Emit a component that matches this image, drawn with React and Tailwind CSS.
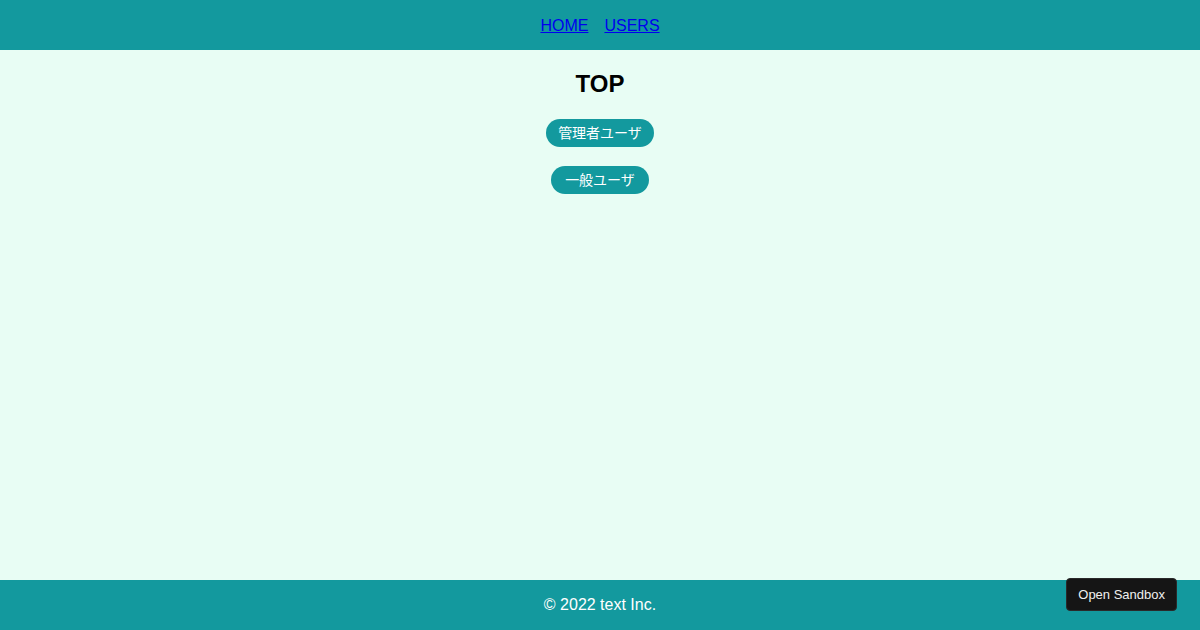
import React from "react";

const SecondaryButton = ({ children, wide }) => (
  <button
    className={`h-[28px] rounded-full bg-[#13999e] text-white text-[14px] leading-none ${
      wide ? "px-3" : "px-[14px]"
    }`}
  >
    {children}
  </button>
);

const App = () => {
  return (
    <div
      className="min-h-screen flex flex-col bg-[#e8fdf4]"
      style={{ fontFamily: '"Liberation Sans", "Noto Sans CJK JP", sans-serif' }}
    >
      <header className="h-[50px] shrink-0 bg-[#13999e] flex items-center justify-center gap-4 pt-[2px]">
        <a href="#" className="text-[16px] text-[#0000ee] underline">HOME</a>
        <a href="#" className="text-[16px] text-[#0000ee] underline">USERS</a>
      </header>

      <main className="flex-1 flex flex-col items-center pt-[20px]">
        <h1 className="text-[24px] font-bold leading-[28px] text-black">TOP</h1>
        <div className="mt-[21px]">
          <SecondaryButton wide>管理者ユーザ</SecondaryButton>
        </div>
        <div className="mt-[19px]">
          <SecondaryButton>一般ユーザ</SecondaryButton>
        </div>
      </main>

      <footer className="h-[50px] shrink-0 bg-[#13999e] flex items-center justify-center">
        <p className="text-[16px] text-white">© 2022 text Inc.</p>
      </footer>

      {/* sandbox badge */}
      <button className="fixed right-[23px] bottom-[19px] h-[33px] px-[11px] rounded bg-[#151515] border border-[#2a2a2a] text-[13px] text-[#f0f0f0]">
        Open Sandbox
      </button>
    </div>
  );
};

export default App;
